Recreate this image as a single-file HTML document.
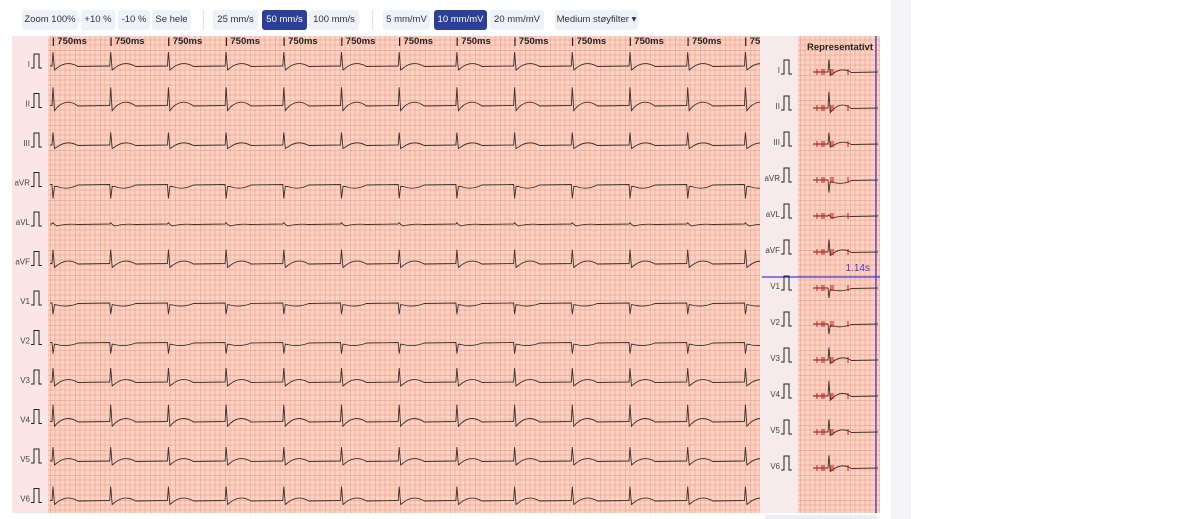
<!DOCTYPE html>
<html><head><meta charset="utf-8">
<style>
body{margin:0;width:1200px;height:519px;background:#fff;font-family:"Liberation Sans",sans-serif;position:relative;overflow:hidden}
.btn{position:absolute;top:10px;height:20px;line-height:20px;background:#eef2f8;color:#333;font-size:9.5px;text-align:center;border-radius:3px}
.act{background:#2b3f97;color:#fff}
.sep{position:absolute;top:10px;width:1px;height:20px;background:#e3e6ec}
svg{position:absolute;left:0;top:0}
</style></head><body>
<div class="btn" style="left:22px;width:56px">Zoom 100%</div>
<div class="btn" style="left:81px;width:34px">+10 %</div>
<div class="btn" style="left:118px;width:32px">-10 %</div>
<div class="btn" style="left:152px;width:39px">Se hele</div>
<div class="sep" style="left:203px"></div>
<div class="btn" style="left:213px;width:45px">25 mm/s</div>
<div class="btn act" style="left:262px;width:45px">50 mm/s</div>
<div class="btn" style="left:309px;width:50px">100 mm/s</div>
<div class="sep" style="left:372px"></div>
<div class="btn" style="left:383px;width:47px">5 mm/mV</div>
<div class="btn act" style="left:434px;width:53px">10 mm/mV</div>
<div class="btn" style="left:490px;width:54px">20 mm/mV</div>
<div class="btn" style="left:555px;width:83px">Medium støyfilter ▾</div>
<div style="position:absolute;left:891px;top:0;width:20px;height:519px;background:#f3f5f9"></div>
<svg id="s" width="1200" height="519" xmlns="http://www.w3.org/2000/svg">
<defs>
<pattern id="g" width="25" height="25" patternUnits="userSpaceOnUse">
<rect width="25" height="25" fill="#fbd3c3"/>
<path d="M5 0V25M10 0V25M15 0V25M20 0V25M0 5H25M0 10H25M0 15H25M0 20H25" stroke="#f4a592" stroke-width="0.7"/>
<path d="M0 0V25M0 0H25" stroke="#ee8b78" stroke-width="0.9"/>
</pattern>
<clipPath id="c"><rect x="12" y="36" width="748" height="477"/></clipPath>
</defs>
<rect x="12" y="36" width="36" height="477" fill="#fae6e5"/>
<rect x="48" y="36" width="712" height="477" fill="url(#g)"/>
<rect x="760" y="36" width="38" height="477" fill="#f7eaea"/>
<rect x="798" y="36" width="82" height="477" fill="url(#g)"/>
<text x="840" y="50" font-size="9.5" font-weight="bold" text-anchor="middle" fill="#222">Representativt</text>
<line x1="876" y1="36" x2="876" y2="513" stroke="#3a3adc" stroke-width="1.2"/>
<line x1="762" y1="277" x2="880" y2="277" stroke="#3a3adc" stroke-width="1.2"/>
<text x="870" y="271" font-size="10" text-anchor="end" fill="#3a3adc">1.14s</text>
<rect x="765" y="515" width="112" height="4" fill="#eceef2"/>
<g id="m" clip-path="url(#c)"></g>
<g id="d"></g>
</svg>
<script>
var d=document.getElementById('d'),m=document.getElementById('m'),h='',hm='';
var leads=['I','II','III','aVR','aVL','aVF','V1','V2','V3','V4','V5','V6'];
var amp=[1,1.3,0.9,-1,0.1,1,-0.8,-0.8,1,1.2,1,1];
for(var k=0;k<13;k++){var x=50+k*57.7;hm+='<text x="'+(x+2)+'" y="44" font-size="9.5" font-weight="bold" fill="#222">| 750ms</text>';}
function beat(x,y,a,s){
 var p='';var R=14*a*s;
 var S=a>0?4*a*s:-2*a*s;
 p+=' L'+(x)+' '+y+' L'+(x+1*s)+' '+(y-R)+' L'+(x+2.5*s)+' '+(y+S)+' L'+(x+5*s)+' '+(y+2)+' Q'+(x+15*s)+' '+(y-6*a*s)+' '+(x+26*s)+' '+(y+0.5);
 return p;
}
for(var i=0;i<12;i++){
 var y=66+i*39.5;
 h+='<text x="30" y="'+(y+1)+'" font-size="8" text-anchor="end" fill="#444">'+leads[i]+'</text>';
 h+='<path d="M31 '+(y+2)+'H34V'+(y-12)+'H39V'+(y+2)+'H42" fill="none" stroke="#222" stroke-width="1"/>';
 var p='M50 '+y;
 for(var k=0;k<13;k++){var x=52+k*57.7;p+=beat(x,y,amp[i],1);p+=' L'+(x+57.7)+' '+y;}
 hm+='<path d="'+p+'" fill="none" stroke="#333" stroke-width="0.9"/>';
 var y2=72+i*36;
 h+='<text x="780" y="'+(y2+1)+'" font-size="8" text-anchor="end" fill="#444">'+leads[i]+'</text>';
 h+='<path d="M781 '+(y2+2)+'H784V'+(y2-12)+'H789V'+(y2+2)+'H792" fill="none" stroke="#222" stroke-width="1"/>';
 var q='M813 '+y2+' L828 '+y2+beat(828,y2,amp[i],0.9)+' L878 '+y2;
 h+='<path d="'+q+'" fill="none" stroke="#333" stroke-width="0.9"/>';
 [817,822,824,831,833,848].forEach(function(mx){h+='<line x1="'+mx+'" y1="'+(y2-3)+'" x2="'+mx+'" y2="'+(y2+3)+'" stroke="#d11" stroke-width="1"/>';});
}
d.innerHTML=h;m.innerHTML=hm;
</script>
</body></html>
